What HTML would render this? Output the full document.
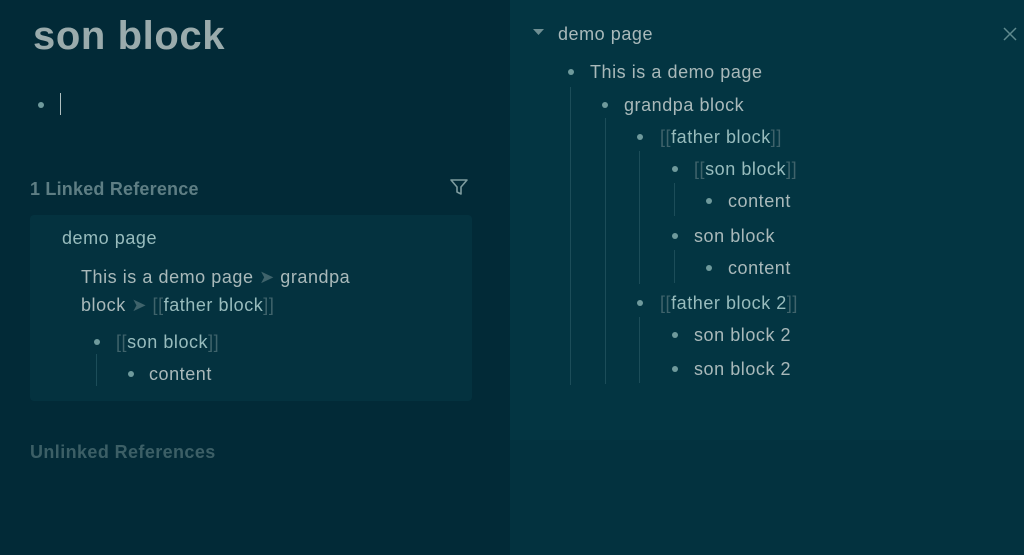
<!DOCTYPE html><html><head><style>
body{margin:0;width:1024px;height:555px;overflow:hidden;background:#022a37;font-family:"Liberation Sans",sans-serif;position:relative}
.a{position:absolute;white-space:nowrap}
.t{color:#a9b9ba;font-size:18px;letter-spacing:0.55px}
.l{color:#98bcbd}
.b{color:#3f636b}
.d{position:absolute;width:6px;height:6px;border-radius:3px;background:#6f9a9c}
.v{position:absolute;width:1px;background:#1c4d59}
</style></head><body>
<div class="a" style="left:510px;top:0;width:514px;height:440px;background:#033542"></div>
<div class="a" style="left:510px;top:440px;width:514px;height:115px;background:#03323f"></div>
<div class="a" style="left:30px;top:215px;width:442px;height:186px;background:#04323f;border-radius:4px"></div>

<div class="a" style="left:33px;top:14px;font-size:40px;font-weight:bold;color:#9aabac;letter-spacing:0.6px">son block</div>
<div class="d" style="left:38px;top:102px"></div>
<div class="a" style="left:60px;top:93px;width:1px;height:22px;background:#b0c0c0"></div>
<div class="a" style="left:30px;top:179px;font-size:18px;font-weight:bold;color:#5e7e84;letter-spacing:0.2px">1 Linked Reference</div>
<svg class="a" style="left:449px;top:178px" width="20" height="20" viewBox="0 0 20 20"><path d="M2 2h16l-6 7v7l-4-2v-5z" fill="none" stroke="#7d9b9e" stroke-width="1.6" stroke-linejoin="round"/></svg>
<div class="a t l" style="left:62px;top:228px">demo page</div>
<div class="a t" style="left:81px;top:267px">This is a demo page <span class="b">➤</span> grandpa</div>
<div class="a t" style="left:81px;top:295px">block <span class="b">➤</span> <span class="b">[[</span><span class="l">father block</span><span class="b">]]</span></div>
<div class="d" style="left:94px;top:339px"></div>
<div class="a t" style="left:116px;top:332px"><span class="b">[[</span><span class="l">son block</span><span class="b">]]</span></div>
<div class="v" style="left:96px;top:354px;height:32px"></div>
<div class="d" style="left:128px;top:371px"></div>
<div class="a t" style="left:149px;top:364px">content</div>
<div class="a" style="left:30px;top:442px;font-size:18px;font-weight:bold;color:#3c5f66;letter-spacing:0.4px">Unlinked References</div>

<svg class="a" style="left:533px;top:29px" width="12" height="8"><path d="M0 0h11l-5.5 6z" fill="#6f8f93"/></svg>
<div class="a t" style="left:558px;top:24px">demo page</div>
<svg class="a" style="left:1002px;top:26px" width="16" height="16"><path d="M2 2l12 12M14 2L2 14" stroke="#5f8a8e" stroke-width="1.5"/></svg>
<div class="d" style="left:568px;top:69px"></div><div class="a t" style="left:590px;top:62px">This is a demo page</div>
<div class="v" style="left:570px;top:87px;height:298px"></div>
<div class="d" style="left:602px;top:102px"></div><div class="a t" style="left:624px;top:95px">grandpa block</div>
<div class="v" style="left:605px;top:118px;height:266px"></div>
<div class="d" style="left:637px;top:134px"></div><div class="a t" style="left:660px;top:127px"><span class="b">[[</span><span class="l">father block</span><span class="b">]]</span></div>
<div class="v" style="left:639px;top:151px;height:133px"></div>
<div class="d" style="left:672px;top:166px"></div><div class="a t" style="left:694px;top:159px"><span class="b">[[</span><span class="l">son block</span><span class="b">]]</span></div>
<div class="v" style="left:674px;top:183px;height:33px"></div>
<div class="d" style="left:706px;top:198px"></div><div class="a t" style="left:728px;top:191px">content</div>
<div class="d" style="left:672px;top:233px"></div><div class="a t" style="left:694px;top:226px">son block</div>
<div class="v" style="left:674px;top:250px;height:33px"></div>
<div class="d" style="left:706px;top:265px"></div><div class="a t" style="left:728px;top:258px">content</div>
<div class="d" style="left:637px;top:300px"></div><div class="a t" style="left:660px;top:293px"><span class="b">[[</span><span class="l">father block 2</span><span class="b">]]</span></div>
<div class="v" style="left:639px;top:317px;height:66px"></div>
<div class="d" style="left:672px;top:332px"></div><div class="a t" style="left:694px;top:325px">son block 2</div>
<div class="d" style="left:672px;top:366px"></div><div class="a t" style="left:694px;top:359px">son block 2</div>
</body></html>
